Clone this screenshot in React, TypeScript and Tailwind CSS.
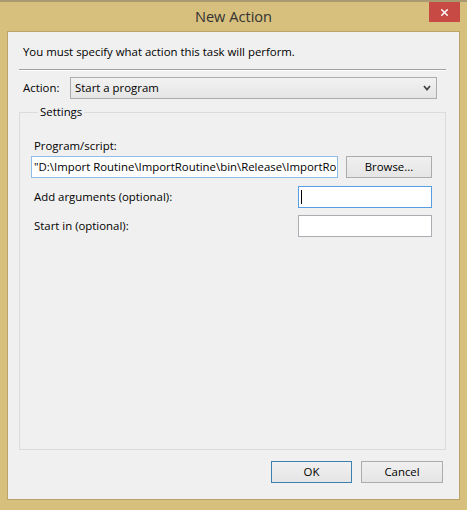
import { X } from 'lucide-react'

const font = { fontFamily: '"Open Sans", "Noto Sans", sans-serif' }

export default function App() {
  return (
    <div
      className="w-[467px] h-[510px] bg-[#d7bf7d] border-t-2 border-[#a99a72] flex flex-col text-[11.4px] leading-[16px] text-black"
      style={font}
    >
      {/* title bar */}
      <div className="relative h-[29px] flex items-center justify-center">
        <span className="text-[14.6px] text-[#333] -mt-[2px]">New Action</span>
        <div className="absolute right-[7px] top-0 w-[31px] h-[20px] bg-[#c84a45] flex items-center justify-center">
          <X className="w-[11px] h-[11px] text-white" strokeWidth={3} />
        </div>
      </div>

      {/* client */}
      <div className="mx-[7px] mb-[10px] flex-1 border border-[#bba46a] bg-[#f0f0f0] pl-[11px] pr-[13px] flex flex-col">
        <p className="mt-[12px] pl-[4px]">You must specify what action this task will perform.</p>
        <div className="mt-[9px] border-t border-[#a0a0a0] border-b border-b-white" />

        <div className="mt-[6px] flex items-center pr-[9px]">
          <span className="pl-[4px] w-[51px]">Action:</span>
          <div className="flex-1 h-[22px] border border-[#acacac] bg-gradient-to-b from-[#f2f2f2] to-[#e5e5e5] flex items-center pl-[4px] pr-[5px]">
            <span className="flex-1">Start a program</span>
            <svg width="8" height="6" viewBox="0 0 8 6">
              <polyline points="1,1 4,4.5 7,1" fill="none" stroke="#444" strokeWidth="1.8" />
            </svg>
          </div>
        </div>

        <fieldset className="mt-[5px] h-[346px] border border-[#dcdcdc] pl-[11px] pr-[12px]">
          <legend className="ml-[7px] px-[2px]">Settings</legend>
          <div className="mt-[18px] pl-[3px]">Program/script:</div>
          <div className="mt-[2px] flex items-center">
            <div className="w-[307px] h-[22px] border border-[#8fbce8] bg-white pl-[2px] overflow-hidden flex items-center">
              <span className="block w-[302px] overflow-hidden whitespace-nowrap">"D:\Import Routine\ImportRoutine\bin\Release\ImportRo</span>
            </div>
            <button className="ml-[8px] w-[86px] h-[22px] border border-[#acacac] bg-gradient-to-b from-[#f0f0f0] to-[#e5e5e5]">
              Browse...
            </button>
          </div>
          <div className="mt-[8px] flex items-center">
            <span className="flex-1 pl-[3px]">Add arguments (optional):</span>
            <div className="w-[134px] h-[22px] border border-[#569de5] bg-white flex items-center pl-[2px] mr-[1px]">
              <div className="w-px h-[14px] bg-black" />
            </div>
          </div>
          <div className="mt-[7px] flex items-center">
            <span className="flex-1 pl-[3px]">Start in (optional):</span>
            <div className="w-[134px] h-[22px] border border-[#abadb3] bg-white mr-[1px]" />
          </div>
        </fieldset>

        <div className="mt-[11px] flex justify-end gap-[9px] pr-[3px]">
          <button className="w-[81px] h-[22px] border border-[#3c7fb1] bg-gradient-to-b from-[#f0f0f0] to-[#e5e5e5]">
            OK
          </button>
          <button className="w-[82px] h-[22px] border border-[#acacac] bg-gradient-to-b from-[#f0f0f0] to-[#e5e5e5]">
            Cancel
          </button>
        </div>
      </div>
    </div>
  )
}
